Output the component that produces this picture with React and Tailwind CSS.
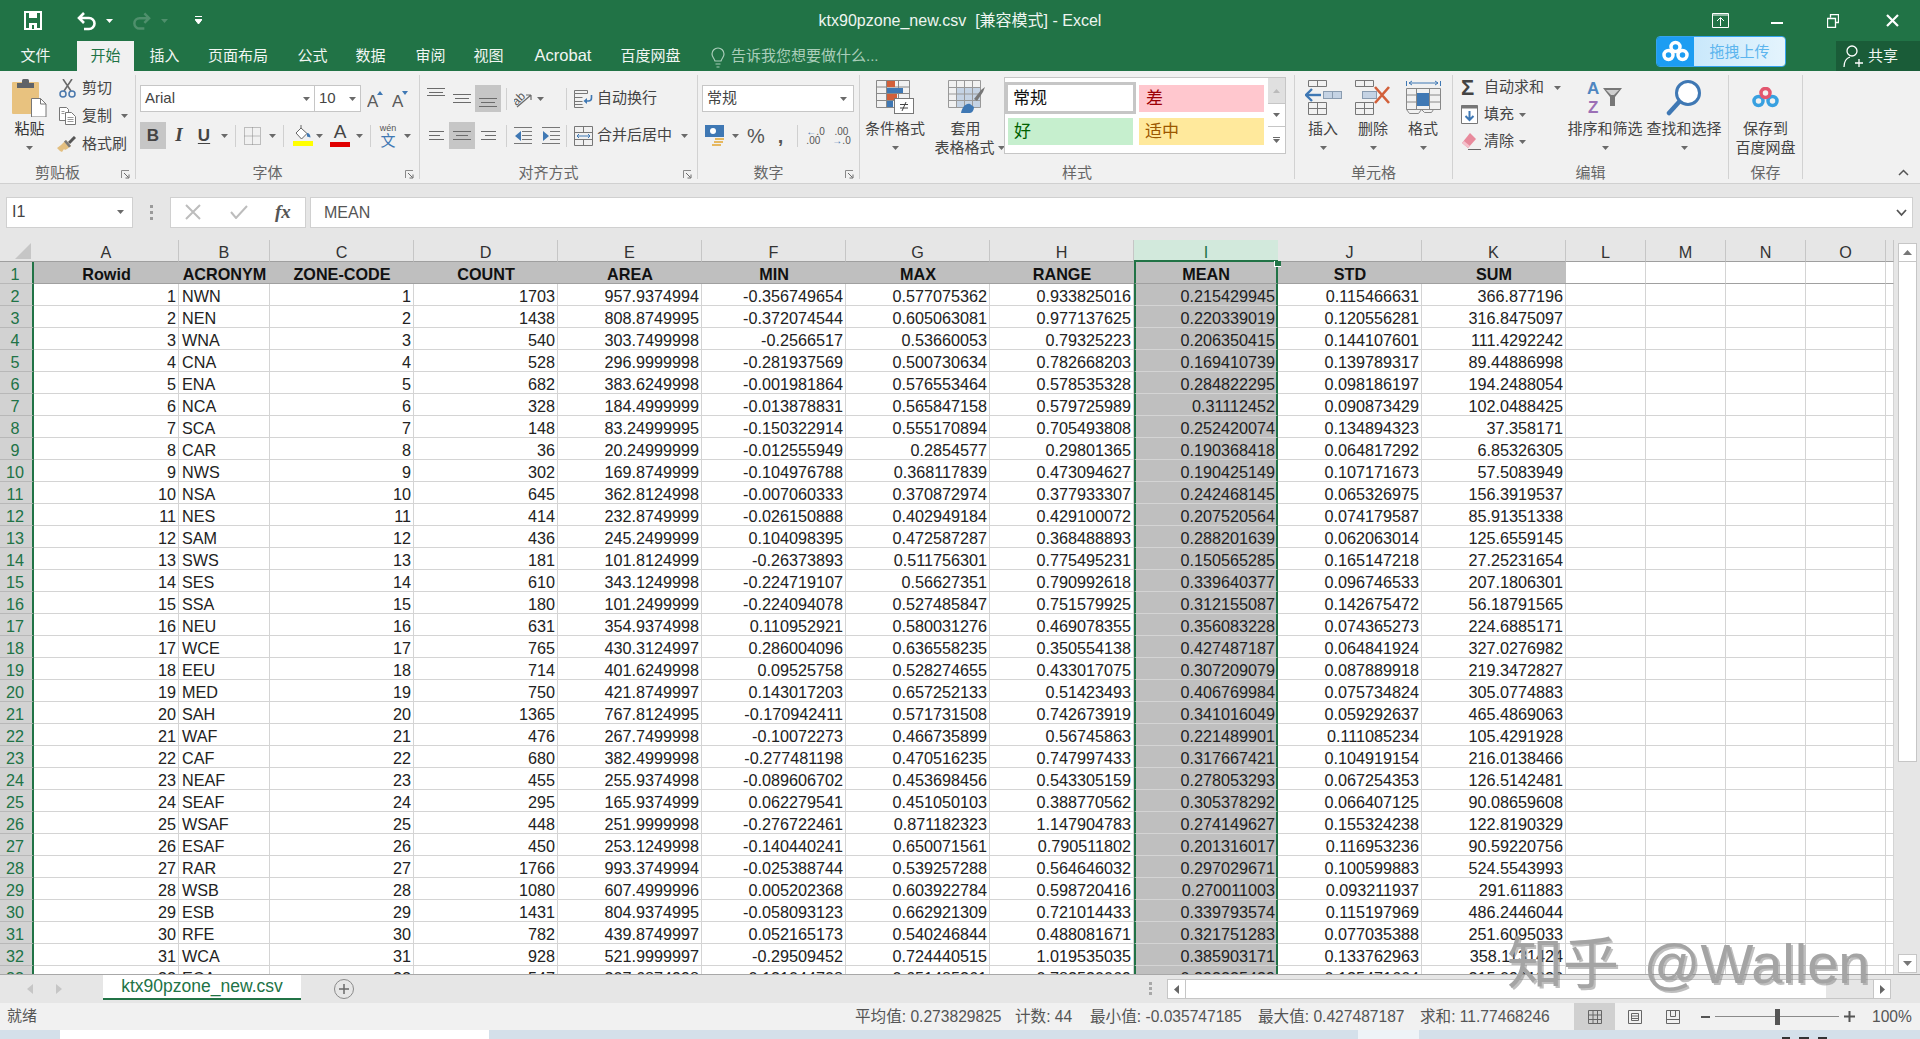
import React from "react";

const rawRows = `1 NWN 1 1703 957.9374994 -0.356749654 0.577075362 0.933825016 0.215429945 0.115466631 366.877196
2 NEN 2 1438 808.8749995 -0.372074544 0.605063081 0.977137625 0.220339019 0.120556281 316.8475097
3 WNA 3 540 303.7499998 -0.2566517 0.53660053 0.79325223 0.206350415 0.144107601 111.4292242
4 CNA 4 528 296.9999998 -0.281937569 0.500730634 0.782668203 0.169410739 0.139789317 89.44886998
5 ENA 5 682 383.6249998 -0.001981864 0.576553464 0.578535328 0.284822295 0.098186197 194.2488054
6 NCA 6 328 184.4999999 -0.013878831 0.565847158 0.579725989 0.31112452 0.090873429 102.0488425
7 SCA 7 148 83.24999995 -0.150322914 0.555170894 0.705493808 0.252420074 0.134894323 37.358171
8 CAR 8 36 20.24999999 -0.012555949 0.2854577 0.29801365 0.190368418 0.064817292 6.85326305
9 NWS 9 302 169.8749999 -0.104976788 0.368117839 0.473094627 0.190425149 0.107171673 57.5083949
10 NSA 10 645 362.8124998 -0.007060333 0.370872974 0.377933307 0.242468145 0.065326975 156.3919537
11 NES 11 414 232.8749999 -0.026150888 0.402949184 0.429100072 0.207520564 0.074179587 85.91351338
12 SAM 12 436 245.2499999 0.104098395 0.472587287 0.368488893 0.288201639 0.062063014 125.6559145
13 SWS 13 181 101.8124999 -0.26373893 0.511756301 0.775495231 0.150565285 0.165147218 27.25231654
14 SES 14 610 343.1249998 -0.224719107 0.56627351 0.790992618 0.339640377 0.096746533 207.1806301
15 SSA 15 180 101.2499999 -0.224094078 0.527485847 0.751579925 0.312155087 0.142675472 56.18791565
16 NEU 16 631 354.9374998 0.110952921 0.580031276 0.469078355 0.356083228 0.074365273 224.6885171
17 WCE 17 765 430.3124997 0.286004096 0.636558235 0.350554138 0.427487187 0.064841924 327.0276982
18 EEU 18 714 401.6249998 0.09525758 0.528274655 0.433017075 0.307209079 0.087889918 219.3472827
19 MED 19 750 421.8749997 0.143017203 0.657252133 0.51423493 0.406769984 0.075734824 305.0774883
20 SAH 20 1365 767.8124995 -0.170942411 0.571731508 0.742673919 0.341016049 0.059292637 465.4869063
21 WAF 21 476 267.7499998 -0.10072273 0.466735899 0.56745863 0.221489901 0.111085234 105.4291928
22 CAF 22 680 382.4999998 -0.277481198 0.470516235 0.747997433 0.317667421 0.104919154 216.0138466
23 NEAF 23 455 255.9374998 -0.089606702 0.453698456 0.543305159 0.278053293 0.067254353 126.5142481
24 SEAF 24 295 165.9374999 0.062279541 0.451050103 0.388770562 0.305378292 0.066407125 90.08659608
25 WSAF 25 448 251.9999998 -0.276722461 0.871182323 1.147904783 0.274149627 0.155324238 122.8190329
26 ESAF 26 450 253.1249998 -0.140440241 0.650071561 0.790511802 0.201316017 0.116953236 90.59220756
27 RAR 27 1766 993.3749994 -0.025388744 0.539257288 0.564646032 0.297029671 0.100599883 524.5543993
28 WSB 28 1080 607.4999996 0.005202368 0.603922784 0.598720416 0.270011003 0.093211937 291.611883
29 ESB 29 1431 804.9374995 -0.058093123 0.662921309 0.721014433 0.339793574 0.115197969 486.2446044
30 RFE 30 782 439.8749997 0.052165173 0.540246844 0.488081671 0.321751283 0.077035388 251.6095033
31 WCA 31 928 521.9999997 -0.29509452 0.724440515 1.019535035 0.385903171 0.133762963 358.1131424
32 ECA 32 547 307.6874998 -0.131044708 0.651485361 0.782530069 0.393235439 0.125471664 215.0991826`;

const rows = rawRows.split("\n").map((line) => line.split(" "));
const headers = ["Rowid", "ACRONYM", "ZONE-CODE", "COUNT", "AREA", "MIN", "MAX", "RANGE", "MEAN", "STD", "SUM"];
const letters = ["A", "B", "C", "D", "E", "F", "G", "H", "I", "J", "K", "L", "M", "N", "O", ""];
const gridCols = "grid grid-cols-[34px_145px_91px_144px_144px_144px_144px_144px_144px_144px_144px_144px_80px_80px_80px_80px_8px] auto-rows-[22px]";

function Caret({ color = "#6a6a6a" }) {
  return (
    <svg width="7" height="4" className="shrink-0">
      <path d="M0 0h7L3.5 4z" fill={color} />
    </svg>
  );
}

function Launcher() {
  return (
    <svg width="9" height="9" className="shrink-0">
      <path d="M.5 8V.5H8" fill="none" stroke="#8a8a8a" />
      <path d="M3 3l4.5 4.5M8 4.5V8H4.5" fill="none" stroke="#6a6a6a" />
    </svg>
  );
}

function Lines({ items, w = 18, h = 18 }) {
  return (
    <svg width={w} height={h}>
      <path d={items.map(([a, b, y]) => `M${a} ${y + 0.5}H${b}`).join("")} stroke="#6b6b6b" fill="none" />
    </svg>
  );
}

function VSep({ className }) {
  return <div className={`w-px bg-[#d0d0d0] shrink-0 ${className}`} />;
}

function GroupSep() {
  return <div className="w-px bg-[#d2d2d2] shrink-0 mt-1 mb-1" />;
}

function GroupLabel({ text, launcher }) {
  return (
    <div className="h-[21px] pt-[2px] flex items-center text-[15px] text-[#666]">
      <div className="flex-1 text-center">{text}</div>
      {launcher && (
        <div className="w-[20px] flex justify-center pt-[1px]">
          <Launcher />
        </div>
      )}
    </div>
  );
}

function BigButton({ icon, lines, caret = true, className }) {
  return (
    <div className={`flex flex-col items-center shrink-0 ${className}`}>
      <div className="h-[38px] mt-[9px] flex items-start justify-center">{icon}</div>
      {lines.map((l) => (
        <div key={l} className="h-[20px] leading-[22px] whitespace-nowrap">{l}</div>
      ))}
      {caret && (
        <div className="h-[20px] flex items-center">
          <Caret />
        </div>
      )}
    </div>
  );
}

/* ---------- ribbon icons ---------- */

const PasteIcon = (
  <svg width="36" height="38" viewBox="0 0 36 38">
    <rect x="0" y="3" width="27" height="32" rx="1" fill="#e8c27f" />
    <path d="M5 4h17v5H5z" fill="#5f6368" />
    <rect x="10" y="0" width="7" height="5" rx="1.5" fill="#5f6368" />
    <path d="M19.5 19.5h9l5.5 5.5v13h-14.5z" fill="#fff" stroke="#777" />
    <path d="M28.5 19.5v5.5h5.5" fill="none" stroke="#777" />
  </svg>
);
const CutIcon = (
  <svg width="17" height="19" viewBox="0 0 17 19">
    <path d="M5 12L13 0M12 12L4 0" stroke="#6a6a6a" strokeWidth="1.6" />
    <circle cx="4" cy="15" r="3" fill="none" stroke="#4a78ad" strokeWidth="1.5" />
    <circle cx="13" cy="15" r="3" fill="none" stroke="#4a78ad" strokeWidth="1.5" />
  </svg>
);
const CopyIcon = (
  <svg width="17" height="18" viewBox="0 0 17 18">
    <path d="M.5.5h7l2 2v11h-9z" fill="#fff" stroke="#777" />
    <path d="M6.5 5.5h6l4 4v8h-10z" fill="#fff" stroke="#777" />
    <path d="M8.5 10.5h6M8.5 12.5h6M8.5 14.5h6M2.5 4.5h3M2.5 6.5h3" stroke="#999" />
  </svg>
);
const BrushIcon = (
  <svg width="19" height="17" viewBox="0 0 19 17">
    <path d="M12 7L18 1" stroke="#555" strokeWidth="3" />
    <path d="M9 4l5 6-4 3-2 1-1-1-2 3-2-1-3-3 4-3z" fill="#e3bf80" />
    <path d="M9 4l5 6-2 1.5-5-6z" fill="#777" />
  </svg>
);
const BorderIcon = (
  <svg width="17" height="18" viewBox="0 0 17 18">
    <path d="M.5.5h16v17H.5zM8.5.5v17M.5 9h16" fill="none" stroke="#888" strokeDasharray="1 1" />
  </svg>
);
const FillIcon = (
  <svg width="17" height="15" viewBox="0 0 17 15">
    <path d="M7 0v3L2 8l5.5 6L13 8.5 7 3" fill="#fff" stroke="#666" />
    <path d="M13 8c2 0 3.5 2 3.5 4.5-1.5 0-2-1-3.500-1z" fill="#3f78b4" />
  </svg>
);
const OrientIcon = (
  <svg width="19" height="19" viewBox="0 0 19 19">
    <text x="0" y="9" fontSize="12" fill="#555" transform="rotate(-45 6 8) translate(-3 3)" fontFamily="Liberation Sans">ab</text>
    <path d="M3 18L17 6M17 6l-5 0M17 6l0 5" fill="none" stroke="#6a6a6a" strokeWidth="1.2" />
  </svg>
);
const WrapIcon = (
  <svg width="19" height="18" viewBox="0 0 19 18">
    <path d="M.5.5h13v3H.5zM.5 3.500v14h9M.5 7.500h8M.5 11.500h8M.5 14.500h8" fill="none" stroke="#777" />
    <path d="M11 11h3.500a3 3 0 0 0 3-3V5" fill="none" stroke="#3f78b4" strokeWidth="1.6" />
    <path d="M13 8l-3.500 3 3.500 3z" fill="#3f78b4" />
  </svg>
);
const MergeIcon = (
  <svg width="19" height="20" viewBox="0 0 19 20">
    <path d="M.5.5h18v19H.5zM.5 6.500h18M.5 13.500h18M9.500.5v6M9.500 13.500v6" fill="none" stroke="#777" />
    <path d="M3 10h13M5 8l-2 2 2 2M14 8l2 2-2 2" fill="none" stroke="#3f78b4" />
  </svg>
);
const OutdentIcon = (
  <svg width="18" height="18" viewBox="0 0 18 18">
    <path d="M0 .5h18M8 4.500h10M8 8.500h10M8 12.500h10M0 16.500h18" stroke="#777" />
    <path d="M7 4v10L1 9z" fill="#3f78b4" />
  </svg>
);
const IndentIcon = (
  <svg width="18" height="18" viewBox="0 0 18 18">
    <path d="M0 .5h18M8 4.500h10M8 8.500h10M8 12.500h10M0 16.500h18" stroke="#777" />
    <path d="M1 4v10l6-5z" fill="#3f78b4" />
  </svg>
);
const CurrencyIcon = (
  <svg width="20" height="22" viewBox="0 0 20 22">
    <rect x="0" y="0" width="19" height="12" fill="#3f78b4" />
    <circle cx="8" cy="6" r="3" fill="#fff" />
    <path d="M10 13h9v2h-9zM9 16h9v2H9zM7 19h9v2H7z" fill="#e6b860" />
  </svg>
);
const CondIcon = (
  <svg width="38" height="34" viewBox="0 0 38 34">
    <path d="M.5.5h33v27H.5zM.5 7h33M.5 13.500h33M.5 20.500h33M10.500.5v27M22.500.5v27" fill="none" stroke="#888" />
    <rect x="11" y="1" width="8" height="6" fill="#d2603a" />
    <rect x="11" y="8" width="16" height="5" fill="#3f78b4" />
    <rect x="11" y="14" width="10" height="6" fill="#d2603a" />
    <rect x="11" y="21" width="6" height="6" fill="#3f78b4" />
    <rect x="18.5" y="18.5" width="19" height="15" fill="#fff" stroke="#777" />
    <path d="M24 24.500h8M24 28h8M30 22l-4 9" stroke="#444" fill="none" />
  </svg>
);
const TableIcon = (
  <svg width="38" height="34" viewBox="0 0 38 34">
    <rect x="9" y="8" width="23" height="20" fill="#c5d3e4" />
    <path d="M.5.5h32v27H.5zM.5 7.500h32M.5 14h32M.5 20.500h32M8.500.5v27M16.500.5v27M24.500.5v27" fill="none" stroke="#999" />
    <path d="M26 19l7-9 4-3-2 5-6 9z" fill="#777" />
    <path d="M13 33c1-6 5-10 9-9l4 3c0 3-2 6-4 6z" fill="#3f78b4" />
  </svg>
);
const InsertIcon = (
  <svg width="37" height="35" viewBox="0 0 37 35">
    <path d="M3.500.5h18v6h-18zM12.500.5v6M3.500 22.500h18v12h-18zM3.500 28.500h18M12.500 22.500v12" fill="none" stroke="#777" />
    <rect x="18.5" y="11.5" width="18" height="7" fill="#c5d3e4" stroke="#8a9cb0" />
    <path d="M27.500 11.500v7" stroke="#8a9cb0" />
    <path d="M2 15h14" stroke="#3f78b4" strokeWidth="2.4" />
    <path d="M7 9L1 15l6 6" fill="none" stroke="#3f78b4" strokeWidth="2.4" />
  </svg>
);
const DeleteIcon = (
  <svg width="36" height="35" viewBox="0 0 36 35">
    <path d="M.5.5h18v6H.5zM9.500.5v6M.5 22.500h18v12H.5zM.5 28.500h18M9.500 22.500v12" fill="none" stroke="#777" />
    <rect x="7.5" y="11.5" width="14" height="7" fill="#c5d3e4" stroke="#8a9cb0" />
    <path d="M20 7l14 16M34 7L20 23" stroke="#d2603a" strokeWidth="2.6" />
  </svg>
);
const FormatIcon = (
  <svg width="35" height="35" viewBox="0 0 35 35">
    <path d="M.5 1v5M34.500 1v5" stroke="#3f78b4" />
    <path d="M3 3h29M6 1L3 3l3 2M29 1l3 2-3 2" fill="none" stroke="#3f78b4" />
    <path d="M.5 8.500h34v21H.5zM.5 15h34M.5 22h34M10.500 8.500v21M23.500 8.500v21" fill="none" stroke="#888" />
    <rect x="11" y="13" width="12" height="13" fill="#3f78b4" />
    <path d="M.5 29.500l3 4h9l3-4M15.500 29.500l3 3h7l2-3" fill="none" stroke="#888" />
  </svg>
);
const FillDownIcon = (
  <svg width="17" height="19" viewBox="0 0 17 19">
    <path d="M.5.5h16v18H.5z" fill="#fff" stroke="#777" />
    <path d="M.5.5h16v3H.5z" fill="#777" />
    <path d="M8.500 6v9M4.500 11l4 4 4-4" fill="none" stroke="#3f78b4" strokeWidth="2" />
  </svg>
);
const EraserIcon = (
  <svg width="20" height="17" viewBox="0 0 20 17">
    <path d="M9 0l6 6-8 9-6-5z" fill="#e88a9c" />
    <path d="M1 10l6 5 2-2-6-5z" fill="#f4c0cb" />
    <path d="M7 16.500h13" stroke="#666" />
  </svg>
);
const SortIcon = (
  <svg width="36" height="34" viewBox="0 0 36 34">
    <text x="0" y="14" fontSize="17" fontWeight="700" fill="#4f86c0" fontFamily="Liberation Sans">A</text>
    <text x="1" y="33" fontSize="17" fontWeight="700" fill="#9b6fb5" fontFamily="Liberation Sans">Z</text>
    <path d="M16 8h19l-7 9v9h-5v-9z" fill="#777" />
    <path d="M19 10h13l-5 5h-3z" fill="#cfcfcf" />
  </svg>
);
const FindIcon = (
  <svg width="36" height="36" viewBox="0 0 36 36">
    <circle cx="22" cy="13" r="11.5" fill="#fff" stroke="#3f78b4" strokeWidth="3" />
    <path d="M13 22L3 33" stroke="#3f78b4" strokeWidth="4.5" strokeLinecap="round" />
  </svg>
);
const BaiduColor = (
  <svg width="27" height="21" viewBox="0 0 27 21">
    <circle cx="6.5" cy="14" r="4.5" fill="none" stroke="#38a0e0" strokeWidth="3.5" />
    <circle cx="20.5" cy="14" r="4.5" fill="none" stroke="#38a0e0" strokeWidth="3.5" />
    <circle cx="13.5" cy="6" r="4.5" fill="none" stroke="#e2566e" strokeWidth="3.5" />
  </svg>
);

/* ---------- top ---------- */

function TitleBar() {
  return (
    <div className="h-[41px] grid grid-cols-[1fr_auto_1fr] items-center text-white">
      <div className="flex items-center">
        <svg width="18" height="19" viewBox="0 0 18 19" className="ml-[24px]">
          <path d="M1 1h16v17H1z" fill="none" stroke="#fff" strokeWidth="2" />
          <path d="M5 1h8v6H5zM5 12h8v6H5z" fill="#fff" />
          <path d="M8 14h2v4H8z" fill="#217346" />
        </svg>
        <svg width="20" height="20" viewBox="0 0 20 20" className="ml-[35px]">
          <path d="M7 2L2 7l5 5M2 7h10a5.500 5.500 0 0 1 0 11H7" fill="none" stroke="#fff" strokeWidth="2.6" />
        </svg>
        <div className="ml-[9px]"><Caret color="#fff" /></div>
        <svg width="19" height="20" viewBox="0 0 20 20" className="ml-[19px]">
          <path d="M13 2l5 5-5 5M18 7H8a5.500 5.500 0 0 0 0 11h5" fill="none" stroke="#4f8f6c" strokeWidth="2.6" />
        </svg>
        <div className="ml-[10px]"><Caret color="#4f8f6c" /></div>
        <svg width="7" height="9" viewBox="0 0 7 9" className="ml-[27px]">
          <path d="M0 .5h7M0 3.500h7L3.500 8z" stroke="#fff" strokeWidth="1" fill="#fff" />
        </svg>
      </div>
      <div className="text-[16px] whitespace-pre text-[#eef5f0]">{"ktx90pzone_new.csv  [兼容模式] - Excel"}</div>
      <div className="flex items-center justify-end">
        <svg width="17" height="15" viewBox="0 0 17 15" className="mr-[42px]">
          <path d="M.5.5h16v14H.5z" fill="none" stroke="#fff" />
          <path d="M.5 2h16M8.500 13V5M5 8l3.500-3.500L12 8" fill="none" stroke="#fff" />
        </svg>
        <div className="w-[12px] h-[2px] bg-white mt-[5px] mr-[44px]" />
        <svg width="12" height="14" viewBox="0 0 12 14" className="mr-[47px]">
          <path d="M3.500 3.500V.5h8v8H8.500M.5 4.500h8v9h-8z" fill="none" stroke="#fff" strokeWidth="1.3" />
        </svg>
        <svg width="13" height="13" viewBox="0 0 13 13" className="mr-[21px]">
          <path d="M1 1l11 11M12 1L1 12" stroke="#fff" strokeWidth="2.2" />
        </svg>
      </div>
    </div>
  );
}

function TabRow() {
  const tab = "h-[30px] leading-[29px] text-center whitespace-nowrap text-[15px] text-[#f1f6f3]";
  return (
    <div className="h-[30px] flex items-end relative">
      <div className={`${tab} ml-[20px] w-[31px]`}>文件</div>
      <div className={`${tab} ml-[26px] w-[57px] !text-[#217346] bg-[#f1f1f1]`}>开始</div>
      <div className={`${tab} ml-[15px] w-[31px]`}>插入</div>
      <div className={`${tab} ml-[28px] w-[60px]`}>页面布局</div>
      <div className={`${tab} ml-[29px] w-[31px]`}>公式</div>
      <div className={`${tab} ml-[27px] w-[31px]`}>数据</div>
      <div className={`${tab} ml-[29px] w-[31px]`}>审阅</div>
      <div className={`${tab} ml-[27px] w-[31px]`}>视图</div>
      <div className={`${tab} ml-[29px] w-[60px] !text-[16.5px]`}>Acrobat</div>
      <div className={`${tab} ml-[27px] w-[61px]`}>百度网盘</div>
      <svg width="14" height="21" viewBox="0 0 14 21" className="ml-[30px] mb-[3px]">
        <path d="M4 14C3 11 1 10 1 7a6 6 0 0 1 12 0c0 3-2 4-3 7zM4.500 17h5M5.500 20h3" fill="none" stroke="#a9cdb9" strokeWidth="1.2" />
      </svg>
      <div className="ml-[6px] h-[30px] leading-[29px] text-[15px] text-[#a9cdb9] whitespace-nowrap">告诉我您想要做什么...</div>

      <div className="ml-auto flex items-end">
        <div className="mb-[4px] mr-[50px] flex h-[31px] w-[130px] rounded-[4px] overflow-hidden border border-[#35a3ee]">
          <div className="w-[37px] bg-[#1c9df2] flex items-center justify-center">
            <svg width="27" height="23" viewBox="0 0 27 23">
              <circle cx="6.5" cy="15" r="4.5" fill="none" stroke="#fff" strokeWidth="3.5" />
              <circle cx="20.5" cy="15" r="4.5" fill="none" stroke="#fff" strokeWidth="3.5" />
              <circle cx="13.5" cy="7" r="4.5" fill="none" stroke="#fff" strokeWidth="3.5" />
            </svg>
          </div>
          <div className="flex-1 bg-gradient-to-r from-[#c9e8fb] to-[#e4f4fd] text-[#5cb5ee] text-[15px] leading-[29px] text-center">拖拽上传</div>
        </div>
        <div className="w-[84px] h-[30px] bg-[#1a5c38] flex items-center text-[15px] text-[#f1f6f3]">
          <svg width="20" height="24" viewBox="0 0 20 24" className="ml-[7px] mr-[5px]">
            <circle cx="9" cy="7" r="5" fill="none" stroke="#fff" strokeWidth="1.3" />
            <path d="M1 23c0-6 3-9 6-10M12 19h8M16 15v8" fill="none" stroke="#fff" strokeWidth="1.3" />
          </svg>
          共享
        </div>
      </div>
    </div>
  );
}

/* ---------- ribbon groups ---------- */

function ClipboardGroup() {
  return (
    <div className="w-[135px] shrink-0 flex flex-col">
      <div className="h-[92px] flex">
        <div className="w-[59px] flex flex-col items-center shrink-0">
          <div className="mt-[8px] h-[39px]">{PasteIcon}</div>
          <div className="h-[20px] leading-[22px] text-[15px] text-[#333]">粘贴</div>
          <div className="h-[20px] flex items-center"><Caret /></div>
        </div>
        <div className="pt-[3px]">
          <div className="h-[28px] flex items-center"><span className="w-[17px] mr-[6px] flex">{CutIcon}</span>剪切</div>
          <div className="h-[28px] flex items-center"><span className="w-[17px] mr-[6px] flex">{CopyIcon}</span>复制<span className="ml-[9px]"><Caret /></span></div>
          <div className="h-[28px] flex items-center"><span className="w-[19px] mr-[4px] -ml-[2px] flex">{BrushIcon}</span><span className="ml-[2px]">格式刷</span></div>
        </div>
      </div>
      <GroupLabel text="剪贴板" launcher />
    </div>
  );
}

function FontGroup() {
  const cell = "flex items-center justify-center shrink-0 h-[27px]";
  return (
    <div className="w-[283px] shrink-0 flex flex-col">
      <div className="h-[92px] pl-[4px] pt-[14px] flex flex-col gap-[10px]">
        <div className="flex items-center h-[27px]">
          <div className="w-[175px] h-[27px] bg-white border border-[#c6c6c6] flex items-center justify-between pl-[4px] pr-[4px] font-['Liberation_Sans',sans-serif] text-[15px] text-[#444]">
            Arial<Caret />
          </div>
          <div className="w-[47px] h-[27px] -ml-px bg-white border border-[#c6c6c6] flex items-center justify-between pl-[4px] pr-[4px] text-[15px] text-[#444]">
            10<Caret />
          </div>
          <div className="flex items-center justify-center w-[29px]">
            <svg width="18" height="18" viewBox="0 0 18 18">
              <text x="0" y="17" fontSize="17" fill="#5a5a5a" fontFamily="Liberation Sans">A</text>
              <path d="M10 5l3-4 3 4z" fill="#3f78b4" />
            </svg>
          </div>
          <div className="flex items-center justify-center w-[22px]">
            <svg width="18" height="18" viewBox="0 0 18 18">
              <text x="0" y="17" fontSize="17" fill="#5a5a5a" fontFamily="Liberation Sans">A</text>
              <path d="M10 1l3 4 3-4z" fill="#3f78b4" />
            </svg>
          </div>
        </div>
        <div className="flex items-center h-[27px]">
          <div className={`${cell} w-[26px] bg-[#c6c6c6] font-['Liberation_Sans',sans-serif] font-bold text-[17px] text-[#444]`}>B</div>
          <div className={`${cell} w-[26px] font-['Liberation_Serif',serif] italic font-bold text-[19px] text-[#444]`}>I</div>
          <div className={`${cell} w-[24px] font-['Liberation_Sans',sans-serif] font-bold text-[17px] text-[#444] underline underline-offset-2`}>U</div>
          <div className={`${cell} w-[16px]`}><Caret /></div>
          <div className={`${cell} w-[6px]`}><VSep className="h-[22px]" /></div>
          <div className={`${cell} w-[29px]`}>{BorderIcon}</div>
          <div className={`${cell} w-[10px]`}><Caret /></div>
          <div className={`${cell} w-[12px]`}><VSep className="h-[22px]" /></div>
          <div className={`${cell} w-[27px] flex-col`}>{FillIcon}<div className="w-[20px] h-[5px] bg-[#ffff00] mt-[1px]" /></div>
          <div className={`${cell} w-[7px]`}><Caret /></div>
          <div className={`${cell} w-[34px] flex-col`}>
            <div className="font-['Liberation_Sans',sans-serif] text-[19px] leading-[16px] font-medium text-[#444]">A</div>
            <div className="w-[20px] h-[5px] bg-[#e00000] mt-[2px]" />
          </div>
          <div className={`${cell} w-[4px]`}><Caret /></div>
          <div className={`${cell} w-[18px]`}><VSep className="h-[22px]" /></div>
          <div className={`${cell} w-[18px] flex-col`}>
            <div className="text-[9px] leading-[9px] text-[#555]">wén</div>
            <div className="text-[15px] leading-[15px] text-[#3f78b4]">文</div>
          </div>
          <div className={`${cell} w-[20px]`}><Caret /></div>
        </div>
      </div>
      <GroupLabel text="字体" launcher />
    </div>
  );
}

function AlignGroup() {
  const cell = "flex items-center justify-center shrink-0 h-[27px]";
  return (
    <div className="w-[277px] shrink-0 flex flex-col">
      <div className="h-[92px] pl-[3px] pt-[14px] flex flex-col gap-[10px]">
        <div className="flex items-center h-[27px]">
          <div className={`${cell} w-[26px] !items-start`}><Lines items={[[0, 18, 3], [2, 16, 7], [0, 18, 10]]} /></div>
          <div className={`${cell} w-[26px]`}><Lines items={[[0, 18, 4], [2, 16, 8], [0, 18, 12]]} /></div>
          <div className={`${cell} w-[26px] bg-[#c6c6c6] !items-end pb-[3px]`}><Lines items={[[0, 18, 7], [2, 16, 11], [0, 18, 15]]} /></div>
          <div className={`${cell} w-[10px]`}><VSep className="h-[22px]" /></div>
          <div className={`${cell} w-[24px]`}>{OrientIcon}</div>
          <div className={`${cell} w-[10px]`}><Caret /></div>
          <VSep className="h-[22px] ml-[21px]" />
          <div className="ml-[7px] flex">{WrapIcon}</div>
          <div className="ml-[4px] whitespace-nowrap">自动换行</div>
        </div>
        <div className="flex items-center h-[27px]">
          <div className={`${cell} w-[26px]`}><Lines w={15} items={[[0, 15, 4], [0, 11, 8], [0, 15, 12]]} /></div>
          <div className={`${cell} w-[26px] bg-[#c6c6c6]`}><Lines items={[[0, 18, 4], [3, 15, 8], [0, 18, 12]]} /></div>
          <div className={`${cell} w-[26px]`}><Lines w={15} items={[[0, 15, 4], [4, 15, 8], [0, 15, 12]]} /></div>
          <div className={`${cell} w-[10px]`}><VSep className="h-[22px]" /></div>
          <div className={`${cell} w-[24px]`}>{OutdentIcon}</div>
          <div className={`${cell} w-[32px]`}>{IndentIcon}</div>
          <VSep className="h-[22px] -ml-[1px]" />
          <div className="ml-[7px] flex">{MergeIcon}</div>
          <div className="ml-[4px] whitespace-nowrap">合并后居中</div>
          <span className="ml-[9px]"><Caret /></span>
        </div>
      </div>
      <GroupLabel text="对齐方式" launcher />
    </div>
  );
}

function NumberGroup() {
  return (
    <div className="w-[161px] shrink-0 flex flex-col">
      <div className="h-[92px] pl-[4px] pt-[14px] flex flex-col gap-[10px]">
        <div className="w-[152px] h-[27px] bg-white border border-[#c6c6c6] flex items-center justify-between pl-[4px] pr-[6px] text-[15px] text-[#444]">
          常规<Caret />
        </div>
        <div className="flex items-center h-[27px]">
          <div className="ml-[3px] flex">{CurrencyIcon}</div>
          <div className="ml-[7px]"><Caret /></div>
          <div className="ml-[8px] font-['Liberation_Sans',sans-serif] text-[20px] text-[#555]">%</div>
          <div className="ml-[13px] font-['Liberation_Sans',sans-serif] font-bold text-[20px] leading-[14px] text-[#555]">,</div>
          <VSep className="h-[22px] ml-[14px]" />
          <div className="ml-[8px] w-[16px] flex flex-col font-['Liberation_Sans',sans-serif] text-[10px] leading-[9px] text-[#555] whitespace-nowrap">
            <span><span className="text-[#3f78b4] font-bold">←</span>.0</span>
            <span>.00</span>
          </div>
          <div className="ml-[10px] w-[16px] flex flex-col font-['Liberation_Sans',sans-serif] text-[10px] leading-[9px] text-[#555] whitespace-nowrap text-right">
            <span>.00</span>
            <span><span className="text-[#3f78b4] font-bold">→</span>.0</span>
          </div>
        </div>
      </div>
      <GroupLabel text="数字" launcher />
    </div>
  );
}

function StylesGroup() {
  return (
    <div className="w-[434px] shrink-0 flex flex-col">
      <div className="h-[92px] flex">
        <BigButton className="w-[70px]" icon={CondIcon} lines={["条件格式"]} />
        <div className="w-[71px] flex flex-col items-center shrink-0">
          <div className="h-[38px] mt-[9px] pl-[2px]">{TableIcon}</div>
          <div className="h-[20px] leading-[22px]">套用</div>
          <div className="h-[20px] leading-[20px] flex items-center whitespace-nowrap pl-[8px]">表格格式<span className="ml-[3px]"><Caret /></span></div>
        </div>
        <div className="mt-[6px] h-[77px] flex shrink-0 ml-[3px] border border-[#c6c6c6] bg-white">
          <div className="w-[263px] pt-[4px] grid grid-cols-[131px_125px] grid-rows-[32px_27px] gap-x-[3px] gap-y-[4px] text-[17px] leading-[27px]">
            <div className="border-[3px] border-[#c6c6c6] pl-[5px] leading-[27px] text-[#111]">常规</div>
            <div className="mt-[3px] h-[27px] bg-[#ffc7ce] pl-[7px] text-[#9c0006]">差</div>
            <div className="mx-[3px] h-[27px] bg-[#c6efce] pl-[6px] text-[#006100]">好</div>
            <div className="h-[27px] bg-[#ffe99c] pl-[6px] text-[#9c5700]">适中</div>
          </div>
          <div className="w-[17px] flex flex-col">
            <div className="h-[26px] bg-[#e0e0e0] flex items-center justify-center border-b border-[#c6c6c6]"><div className="rotate-180"><Caret color="#bbb" /></div></div>
            <div className="h-[23px] flex items-center justify-center border-b border-[#c6c6c6]"><Caret /></div>
            <div className="flex-1 flex flex-col items-center justify-center gap-px">
              <div className="w-[7px] h-px bg-[#6a6a6a]" />
              <Caret />
            </div>
          </div>
        </div>
      </div>
      <GroupLabel text="样式" />
    </div>
  );
}

function CellsGroup() {
  return (
    <div className="w-[157px] shrink-0 flex flex-col">
      <div className="h-[92px] flex pl-[3px]">
        <BigButton className="w-[50px]" icon={InsertIcon} lines={["插入"]} />
        <BigButton className="w-[50px]" icon={DeleteIcon} lines={["删除"]} />
        <BigButton className="w-[50px]" icon={FormatIcon} lines={["格式"]} />
      </div>
      <GroupLabel text="单元格" />
    </div>
  );
}

function EditGroup() {
  return (
    <div className="w-[275px] shrink-0 flex flex-col">
      <div className="h-[92px] flex">
        <div className="w-[112px] shrink-0 pt-[3px] pl-[8px]">
          <div className="h-[27px] flex items-center">
            <span className="w-[23px] font-['Liberation_Sans',sans-serif] font-bold text-[22px] text-[#444] leading-[22px]">Σ</span>
            自动求和<span className="ml-[10px]"><Caret /></span>
          </div>
          <div className="h-[27px] flex items-center">
            <span className="w-[23px] flex">{FillDownIcon}</span>
            填充<span className="ml-[5px]"><Caret /></span>
          </div>
          <div className="h-[27px] flex items-center">
            <span className="w-[23px] flex">{EraserIcon}</span>
            清除<span className="ml-[5px]"><Caret /></span>
          </div>
        </div>
        <BigButton className="w-[80px]" icon={SortIcon} lines={["排序和筛选"]} />
        <BigButton className="w-[78px]" icon={FindIcon} lines={["查找和选择"]} />
      </div>
      <GroupLabel text="编辑" />
    </div>
  );
}

function SaveGroup() {
  return (
    <div className="w-[73px] shrink-0 flex flex-col">
      <div className="h-[92px] flex justify-center">
        <div className="flex flex-col items-center">
          <div className="h-[38px] mt-[9px] pt-[7px]">{BaiduColor}</div>
          <div className="h-[20px] leading-[22px] whitespace-nowrap">保存到</div>
          <div className="h-[20px] leading-[20px] whitespace-nowrap">百度网盘</div>
        </div>
      </div>
      <GroupLabel text="保存" />
    </div>
  );
}

function Ribbon() {
  return (
    <div className="h-[113px] bg-[#f1f1f1] border-b border-[#d0d0d0] flex text-[15px] text-[#444]">
      <ClipboardGroup />
      <GroupSep />
      <FontGroup />
      <GroupSep />
      <AlignGroup />
      <GroupSep />
      <NumberGroup />
      <GroupSep />
      <StylesGroup />
      <GroupSep />
      <CellsGroup />
      <GroupSep />
      <EditGroup />
      <GroupSep />
      <SaveGroup />
      <GroupSep />
      <div className="flex-1 flex items-end justify-end pb-[7px] pr-[11px]">
        <svg width="11" height="7" viewBox="0 0 11 7">
          <path d="M1 6l4.500-4.500L10 6" fill="none" stroke="#555" strokeWidth="1.5" />
        </svg>
      </div>
    </div>
  );
}

function FormulaBar() {
  return (
    <div className="h-[56px] bg-[#e6e6e6] flex items-center font-['Liberation_Sans',sans-serif] text-[16px] text-[#444]">
      <div className="ml-[6px] w-[127px] h-[31px] bg-white border border-[#d0d0d0] flex items-center justify-between pl-[5px] pr-[8px]">
        I1<Caret />
      </div>
      <div className="w-[37px] flex flex-col items-center gap-[3px]">
        <div className="w-[3px] h-[3px] bg-[#9a9a9a]" />
        <div className="w-[3px] h-[3px] bg-[#9a9a9a]" />
        <div className="w-[3px] h-[3px] bg-[#9a9a9a]" />
      </div>
      <div className="w-[136px] h-[31px] bg-white border border-[#d0d0d0] flex items-center">
        <svg width="16" height="16" viewBox="0 0 16 16" className="ml-[14px]">
          <path d="M1 1l14 14M15 1L1 15" stroke="#bdbdbd" strokeWidth="2" />
        </svg>
        <svg width="18" height="14" viewBox="0 0 18 14" className="ml-[29px]">
          <path d="M1 7l5 6L17 1" fill="none" stroke="#bdbdbd" strokeWidth="2" />
        </svg>
        <span className="ml-[27px] font-['Liberation_Serif',serif] italic font-bold text-[19px] text-[#555]">fx</span>
      </div>
      <div className="ml-[4px] flex-1 mr-[7px] h-[31px] pt-[1px] bg-white border border-[#d0d0d0] flex items-center justify-between pl-[13px] pr-[5px] text-[#555]">
        MEAN
        <svg width="11" height="8" viewBox="0 0 11 8">
          <path d="M1 1l4.500 5L10 1" fill="none" stroke="#555" strokeWidth="1.8" />
        </svg>
      </div>
    </div>
  );
}

/* ---------- sheet ---------- */

function HeaderRow() {
  return (
    <>
      <div className="bg-[#e6e6e6] border-b border-[#9f9f9f] flex items-end justify-end pr-[3px] pb-[2px]">
        <svg width="16" height="16"><path d="M16 0v16H0z" fill="#c6c6c6" /></svg>
      </div>
      {letters.map((l, i) => (
        <div
          key={i}
          className={
            l === "I"
              ? "bg-[#d2e9dc] text-center text-[#217346] leading-[24px] border-b-2 border-[#217346]"
              : "bg-[#e6e6e6] text-center text-[#333] leading-[24px] border-r border-[#c6c6c6] border-b border-b-[#9f9f9f]"
          }
        >
          {l}
        </div>
      ))}
    </>
  );
}

function RowHead({ n }) {
  return (
    <div className="bg-[#d2d2d2] text-center text-[#217346] leading-[24px] border-b border-[#b8b8b8] border-r-2 border-r-[#217346] pr-[2px]">
      {n}
    </div>
  );
}

function TitleRow() {
  return (
    <>
      <RowHead n={1} />
      {headers.map((h) =>
        h === "MEAN" ? (
          <div key={h} className="relative bg-[#bfbfbf] text-center font-bold text-[#111] leading-[24px] border-x-2 border-[#217346] border-b border-b-[#a0a0a0]">
            {h}
            <div className="absolute -right-[5px] -top-[1px] w-[7px] h-[6px] bg-[#217346] border-l border-b border-white" />
          </div>
        ) : (
          <div key={h} className="bg-[#bfbfbf] text-center font-bold text-[#111] leading-[24px] border-b border-[#a0a0a0] whitespace-nowrap overflow-hidden">
            {h}
          </div>
        )
      )}
      {[0, 1, 2, 3, 4].map((i) => (
        <div key={i} className="bg-white border-r border-[#d4d4d4] border-b border-b-[#a0a0a0]" />
      ))}
    </>
  );
}

function DataRow({ row, n }) {
  return (
    <>
      <RowHead n={n} />
      {row.map((v, i) =>
        i === 8 ? (
          <div key={i} className="bg-[#bfbfbf] text-right text-[#222] leading-[24px] pr-[1px] border-x-2 border-[#217346] border-b border-b-[#d4d4d4]">{v}</div>
        ) : (
          <div key={i} className={`bg-white leading-[24px] text-[#222] border-r border-b border-[#d4d4d4] whitespace-nowrap overflow-hidden ${i === 1 ? "text-left pl-[3px]" : "text-right pr-[2px]"}`}>{v}</div>
        )
      )}
      {[0, 1, 2, 3, 4].map((i) => (
        <div key={i} className="bg-white border-r border-b border-[#d4d4d4]" />
      ))}
    </>
  );
}

function VScroll() {
  return (
    <div className="w-[26px] shrink-0 bg-[#e6e6e6] pl-[4px] pr-[3px] pt-[3px] pb-[1px] flex flex-col">
      <div className="h-[19px] bg-white border border-[#c6c6c6] flex items-center justify-center">
        <svg width="9" height="5"><path d="M0 5h9L4.500 0z" fill="#777" /></svg>
      </div>
      <div className="h-[500px] bg-white border border-[#c6c6c6] border-t-0" />
      <div className="flex-1" />
      <div className="h-[19px] bg-white border border-[#c6c6c6] flex items-center justify-center">
        <svg width="9" height="5"><path d="M0 0h9L4.500 5z" fill="#777" /></svg>
      </div>
    </div>
  );
}

function Sheet() {
  return (
    <div className="h-[734px] flex overflow-hidden font-['Liberation_Sans',sans-serif] text-[16.2px]">
      <div className={`${gridCols} w-[1894px] shrink-0 content-start bg-white`}>
        <HeaderRow />
        <TitleRow />
        {rows.map((r, i) => (
          <DataRow key={i} row={r} n={i + 2} />
        ))}
      </div>
      <VScroll />
    </div>
  );
}

function SheetTabs() {
  return (
    <div className="h-[29px] bg-[#e6e6e6] border-t border-[#a8a8a8] flex font-['Liberation_Sans',sans-serif]">
      <svg width="6" height="10" viewBox="0 0 6 10" className="ml-[27px] mt-[9px]"><path d="M6 0v10L0 5z" fill="#c6c6c6" /></svg>
      <svg width="6" height="10" viewBox="0 0 6 10" className="ml-[23px] mt-[9px]"><path d="M0 0v10l6-5z" fill="#c6c6c6" /></svg>
      <div className="ml-[41px] w-[198px] h-[25px] bg-white border-b-2 border-[#217346] text-center text-[17.5px] leading-[22px] text-[#217346]">ktx90pzone_new.csv</div>
      <div className="ml-[33px] mt-[4px] w-[20px] h-[20px] rounded-full border border-[#8a8a8a] flex items-center justify-center">
        <svg width="10" height="10"><path d="M5 0v10M0 5h10" stroke="#6a6a6a" strokeWidth="1.5" /></svg>
      </div>
      <div className="ml-[795px] mt-[7px] flex flex-col gap-[2px]">
        <div className="w-[3px] h-[3px] bg-[#a8a8a8]" />
        <div className="w-[3px] h-[3px] bg-[#a8a8a8]" />
        <div className="w-[3px] h-[3px] bg-[#a8a8a8]" />
      </div>
      <div className="ml-[15px] mt-[4px] w-[724px] h-[20px] flex border border-[#c6c6c6] bg-white">
        <div className="w-[18px] border-r border-[#c6c6c6] flex items-center justify-center">
          <svg width="5" height="9"><path d="M5 0v9L0 4.500z" fill="#666" /></svg>
        </div>
        <div className="flex-1" />
        <div className="w-[47px] bg-[#e6e6e6]" />
        <div className="w-[17px] border-l border-[#c6c6c6] flex items-center justify-center">
          <svg width="5" height="9"><path d="M0 0v9l5-4.500z" fill="#666" /></svg>
        </div>
      </div>
    </div>
  );
}

function StatusBar() {
  return (
    <div className="h-[27px] bg-[#f1f1f1] flex items-center text-[15.6px] text-[#555] whitespace-nowrap">
      <div className="ml-[7px] flex-1 text-[15px]">就绪</div>
      <div className="w-[160px]">平均值: 0.273829825</div>
      <div className="w-[75px]">计数: 44</div>
      <div className="w-[168px]">最小值: -0.035747185</div>
      <div className="w-[162px]">最大值: 0.427487187</div>
      <div className="w-[154px]">求和: 11.77468246</div>
      <div className="w-[41px] h-[27px] bg-[#d0d0d0] flex items-center justify-center">
        <svg width="14" height="14"><path d="M.5.5h13v13H.5zM.5 5h13M.5 9.500h13M5 .5v13M9.500.5v13" fill="none" stroke="#666" /></svg>
      </div>
      <div className="w-[40px] flex justify-center">
        <svg width="14" height="14"><path d="M.5.5h13v13H.5zM3.500 3.500h7v7h-7zM3.500 6h7M3.500 8.500h7" fill="none" stroke="#666" /></svg>
      </div>
      <div className="w-[36px] flex justify-center">
        <svg width="14" height="14"><path d="M.5.5h13v13H.5zM4.500.5v6h5v-6M.5 9.500h13" fill="none" stroke="#666" /></svg>
      </div>
      <div className="ml-[6px] w-[16px] flex justify-center"><div className="w-[9px] h-[2px] bg-[#555]" /></div>
      <div className="ml-[2px] w-[124px] h-px bg-[#8a8a8a] flex items-center justify-center">
        <div className="w-[5px] h-[16px] bg-[#555] shrink-0" />
      </div>
      <div className="w-[20px] flex justify-center">
        <svg width="11" height="11"><path d="M5.500 0v11M0 5.500h11" stroke="#555" strokeWidth="2" /></svg>
      </div>
      <div className="ml-[13px] mr-[8px] w-[40px] font-['Liberation_Sans',sans-serif]">100%</div>
    </div>
  );
}

function DesktopStrip() {
  return (
    <div className="h-[9px] flex bg-[#d4e0ea]">
      <div className="ml-[60px] w-[429px] bg-white" />
      <div className="ml-[869px] w-[61px] bg-[#eef3f7]" />
      <div className="ml-[363px] mt-[7px] flex gap-[9px]">
        <div className="w-[8px] h-[2px] bg-[#333]" />
        <div className="w-[10px] h-[2px] bg-[#333]" />
        <div className="w-[9px] h-[2px] bg-[#333]" />
      </div>
    </div>
  );
}

export default function App() {
  return (
    <div className="relative w-[1920px] h-[1039px] overflow-hidden font-['Liberation_Sans','Noto_Sans_CJK_SC',sans-serif]">
      <div className="bg-[#217346]">
        <TitleBar />
        <TabRow />
      </div>
      <Ribbon />
      <FormulaBar />
      <Sheet />
      <SheetTabs />
      <StatusBar />
      <DesktopStrip />
      {/* zhihu watermark sits on top of the sheet */}
      <div className="absolute left-[1507px] top-[924px] text-[56px] leading-[70px] whitespace-pre text-[#a4a4a4] [text-shadow:2px_2px_0_#7f7f7f80] font-['Noto_Sans_CJK_SC',sans-serif] pointer-events-none">
        知乎 <span className="font-['Liberation_Sans',sans-serif] ml-[12px]">@Wallen</span>
      </div>
    </div>
  );
}
